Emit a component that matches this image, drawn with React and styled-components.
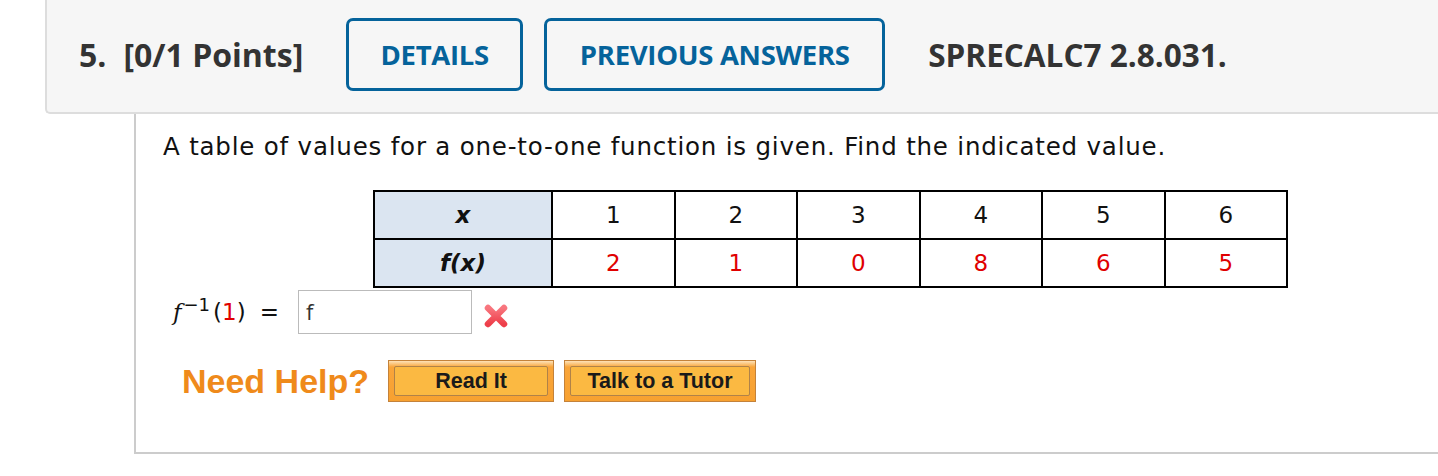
import React from "react";
import styled, { createGlobalStyle } from "styled-components";

const GlobalStyle = createGlobalStyle`
  html, body {
    margin: 0;
    padding: 0;
    background: #fff;
  }
`;

const Page = styled.div`
  padding-left: 45px;
  overflow: hidden;
`;

const Header = styled.div`
  display: flex;
  align-items: center;
  box-sizing: border-box;
  height: 114px;
  padding: 0 0 4px 32px;
  background: #f6f6f6;
  border-left: 2px solid #dddddd;
  border-bottom: 2px solid #dddddd;
  border-bottom-left-radius: 5px;
  font-family: "Open Sans", "Liberation Sans", sans-serif;
  font-weight: 700;
  color: #333;
`;

const Title = styled.div`
  font-size: 32px;
  margin-right: 43px;
  white-space: nowrap;
`;

const Num = styled.span`
  margin-right: 17px;
`;

const OutlineButton = styled.div`
  box-sizing: border-box;
  height: 73px;
  width: ${(p) => p.$w}px;
  margin-right: 21px;
  display: flex;
  align-items: center;
  justify-content: center;
  border: 3px solid #05639b;
  border-radius: 7px;
  color: #05639b;
  font-size: 27.5px;
  letter-spacing: -0.3px;
  white-space: nowrap;
`;

const Code = styled.div`
  margin-left: 22px;
  font-size: 31.5px;
  white-space: nowrap;
`;

const Body = styled.div`
  margin-left: 89px;
  height: 340px;
  border-left: 2px solid #cccccc;
  border-bottom: 2px solid #cccccc;
  padding: 18px 0 0 27px;
  box-sizing: border-box;
  font-family: "DejaVu Sans", Verdana, sans-serif;
  color: #111;
`;

const Prompt = styled.p`
  margin: 0;
  font-size: 24.5px;
  letter-spacing: 0.8px;
  line-height: 30px;
  white-space: nowrap;
`;

const ValueTable = styled.table`
  margin: 28px 0 0 210px;
  border-collapse: collapse;
  font-size: 23px;
`;

const Cell = styled.td`
  border: 2px solid #000;
  height: 46px;
  width: ${(p) => (p.$head ? 176 : 120.5)}px;
  padding: 0;
  text-align: center;
  background: ${(p) => (p.$head ? "#dbe5f1" : "#fff")};
  color: ${(p) => (p.$red ? "#e00000" : "#111")};
  font-weight: ${(p) => (p.$head ? 700 : 400)};
  font-style: ${(p) => (p.$head ? "italic" : "normal")};
`;

const AnswerRow = styled.div`
  display: flex;
  align-items: flex-start;
  margin: 2px 0 0 10px;
  font-size: 23px;
`;

const MathLabel = styled.span`
  margin: 9px 19px 0 0;
  white-space: nowrap;
`;

const Fn = styled.span`
  font-family: "DejaVu Serif", serif;
  font-style: italic;
  margin-right: 2px;
`;

const Sup = styled.sup`
  font-size: 18px;
  vertical-align: 9px;
  line-height: 0;
  margin-right: 3px;
`;

const Red = styled.span`
  color: #e00000;
`;

const Eq = styled.span`
  margin-left: 14px;
`;

const AnswerBox = styled.div`
  box-sizing: border-box;
  width: 174px;
  height: 44px;
  border: 1px solid #bbbbbb;
  padding: 5px 0 0 7px;
  font-family: "Open Sans", sans-serif;
  font-size: 22px;
  color: #333;
`;

const Wrong = styled.svg`
  margin: 12px 0 0 10px;
`;

const HelpRow = styled.div`
  display: flex;
  align-items: center;
  margin: 26px 0 0 19px;
`;

const NeedHelp = styled.span`
  font-family: "Liberation Sans", Arial, sans-serif;
  font-weight: 700;
  font-size: 34px;
  color: #ef8a1b;
  margin-right: 19px;
`;

const HelpButton = styled.div`
  box-sizing: border-box;
  width: ${(p) => p.$w}px;
  height: 42px;
  margin-right: 10px;
  padding: 5px 5px 5px;
  background: linear-gradient(#fde2b8 0, #f9a53a 6px, #f7a130 100%);
  border: 1px solid #c4823a;
  display: flex;
`;

const HelpInner = styled.span`
  flex: 1;
  display: flex;
  align-items: center;
  justify-content: center;
  background: #fbb942;
  border: 1px solid #b08248;
  border-radius: 2px;
  font-family: "Liberation Sans", Arial, sans-serif;
  font-weight: 700;
  font-size: 21.5px;
  color: #1a1a1a;
`;

const xs = [1, 2, 3, 4, 5, 6];
const fx = [2, 1, 0, 8, 6, 5];

export default function App() {
  return (
    <>
      <GlobalStyle />
      <Page>
        <Header>
          <Title>
            <Num>5.</Num>[0/1 Points]
          </Title>
          <OutlineButton $w={177}>DETAILS</OutlineButton>
          <OutlineButton $w={341}>PREVIOUS ANSWERS</OutlineButton>
          <Code>SPRECALC7 2.8.031.</Code>
        </Header>
        <Body>
          <Prompt>
            A table of values for a one-to-one function is given. Find the
            indicated value.
          </Prompt>
          <ValueTable>
            <tbody>
              <tr>
                <Cell $head>x</Cell>
                {xs.map((v) => (
                  <Cell key={v}>{v}</Cell>
                ))}
              </tr>
              <tr>
                <Cell $head>f(x)</Cell>
                {fx.map((v, i) => (
                  <Cell key={i} $red>
                    {v}
                  </Cell>
                ))}
              </tr>
            </tbody>
          </ValueTable>
          <AnswerRow>
            <MathLabel>
              <Fn>f</Fn>
              <Sup>−1</Sup>(<Red>1</Red>)<Eq>=</Eq>
            </MathLabel>
            <AnswerBox>f</AnswerBox>
            <Wrong width="28" height="28" viewBox="0 0 28 28">
              <defs>
                <linearGradient id="xg" x1="0" y1="0" x2="0" y2="1">
                  <stop offset="0" stopColor="#f8767e" />
                  <stop offset="1" stopColor="#ee3e4a" />
                </linearGradient>
              </defs>
              <path
                d="M6 6 L22 22 M22 6 L6 22"
                stroke="url(#xg)"
                strokeWidth="6.5"
                strokeLinecap="round"
              />
            </Wrong>
          </AnswerRow>
          <HelpRow>
            <NeedHelp>Need Help?</NeedHelp>
            <HelpButton $w={166}>
              <HelpInner>Read It</HelpInner>
            </HelpButton>
            <HelpButton $w={192}>
              <HelpInner>Talk to a Tutor</HelpInner>
            </HelpButton>
          </HelpRow>
        </Body>
      </Page>
    </>
  );
}
